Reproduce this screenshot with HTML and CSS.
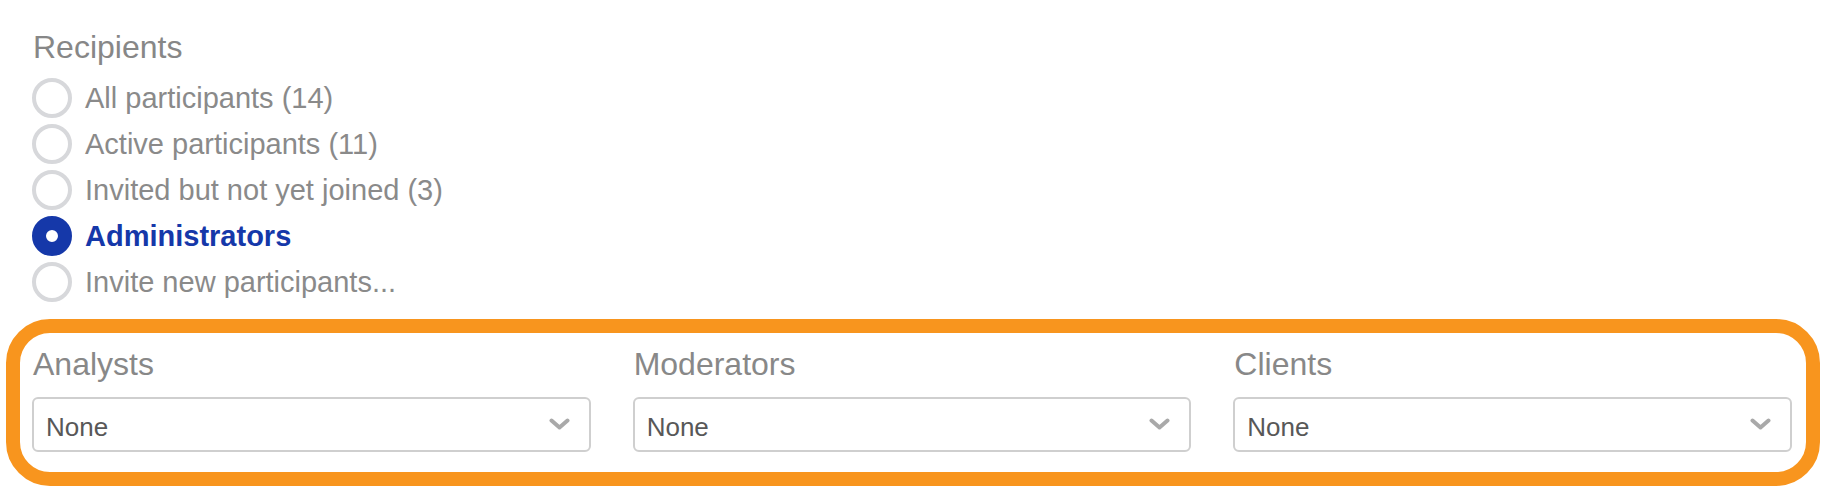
FILE: index.html
```html
<!DOCTYPE html>
<html lang="en">
<head>
<meta charset="utf-8">
<title>Recipients</title>
<link rel="stylesheet" href="styles.css">
</head>
<body>
<div class="page">
  <div class="section-title">Recipients</div>
  <div class="radio-list">
    <label class="radio-row"><span class="radio"></span><span class="radio-label">All participants (14)</span></label>
    <label class="radio-row"><span class="radio"></span><span class="radio-label">Active participants (11)</span></label>
    <label class="radio-row"><span class="radio"></span><span class="radio-label">Invited but not yet joined (3)</span></label>
    <label class="radio-row selected"><span class="radio"></span><span class="radio-label">Administrators</span></label>
    <label class="radio-row"><span class="radio"></span><span class="radio-label">Invite new participants...</span></label>
  </div>
  <div class="highlight">
    <div class="field">
      <div class="field-label">Analysts</div>
      <div class="select"><span class="select-value">None</span><svg class="chevron" viewBox="0 0 21 12" width="21" height="12"><path d="M2.5 2.5 L10.5 9.5 L18.5 2.5" /></svg></div>
    </div>
    <div class="field">
      <div class="field-label">Moderators</div>
      <div class="select"><span class="select-value">None</span><svg class="chevron" viewBox="0 0 21 12" width="21" height="12"><path d="M2.5 2.5 L10.5 9.5 L18.5 2.5" /></svg></div>
    </div>
    <div class="field">
      <div class="field-label">Clients</div>
      <div class="select"><span class="select-value">None</span><svg class="chevron" viewBox="0 0 21 12" width="21" height="12"><path d="M2.5 2.5 L10.5 9.5 L18.5 2.5" /></svg></div>
    </div>
  </div>
</div>
</body>
</html>
```

FILE: styles.css
```css
html, body {
  margin: 0;
  padding: 0;
  background: #ffffff;
}

body {
  font-family: "Liberation Sans", Arial, Helvetica, sans-serif;
  color: #888888;
}

.page {
  padding: 27px 1px 0 6px;
}

.section-title {
  font-size: 32px;
  line-height: 40px;
  color: #878787;
  margin-left: 27px;
  margin-bottom: 8px;
}

.radio-list {
  display: flex;
  flex-direction: column;
  margin-left: 26px;
}

.radio-row {
  display: flex;
  align-items: center;
  height: 46px;
}

.radio {
  box-sizing: border-box;
  width: 40px;
  height: 40px;
  border-radius: 50%;
  border: 4px solid #d7d8db;
  background: #ffffff;
  flex: none;
}

.radio-label {
  margin-left: 13px;
  font-size: 29px;
  line-height: 46px;
  color: #8a8a8a;
}

.radio-row.selected .radio {
  border: 14px solid #1538a9;
}

.radio-row.selected .radio-label {
  color: #1538a9;
  font-weight: bold;
}

.highlight {
  margin-top: 14px;
  box-sizing: border-box;
  height: 167px;
  border: 14px solid #f8951e;
  border-radius: 44px;
  padding: 11px 14px 20px 12px;
  display: grid;
  grid-template-columns: 1fr 1fr 1fr;
  column-gap: 42px;
}

.field {
  display: flex;
  flex-direction: column;
}

.field-label {
  font-size: 32px;
  line-height: 40px;
  color: #888888;
  margin-left: 1px;
  margin-bottom: 13px;
}

.select {
  box-sizing: border-box;
  height: 55px;
  border: 2px solid #cfcfcf;
  border-radius: 6px;
  display: flex;
  align-items: center;
  justify-content: space-between;
  padding: 5px 19px 0 12px;
}

.select-value {
  font-size: 26px;
  color: #585858;
}

.chevron {
  display: block;
  margin-top: -6px;
}

.chevron path {
  fill: none;
  stroke: #a9a9a9;
  stroke-width: 4;
  stroke-linecap: round;
  stroke-linejoin: round;
}
```
